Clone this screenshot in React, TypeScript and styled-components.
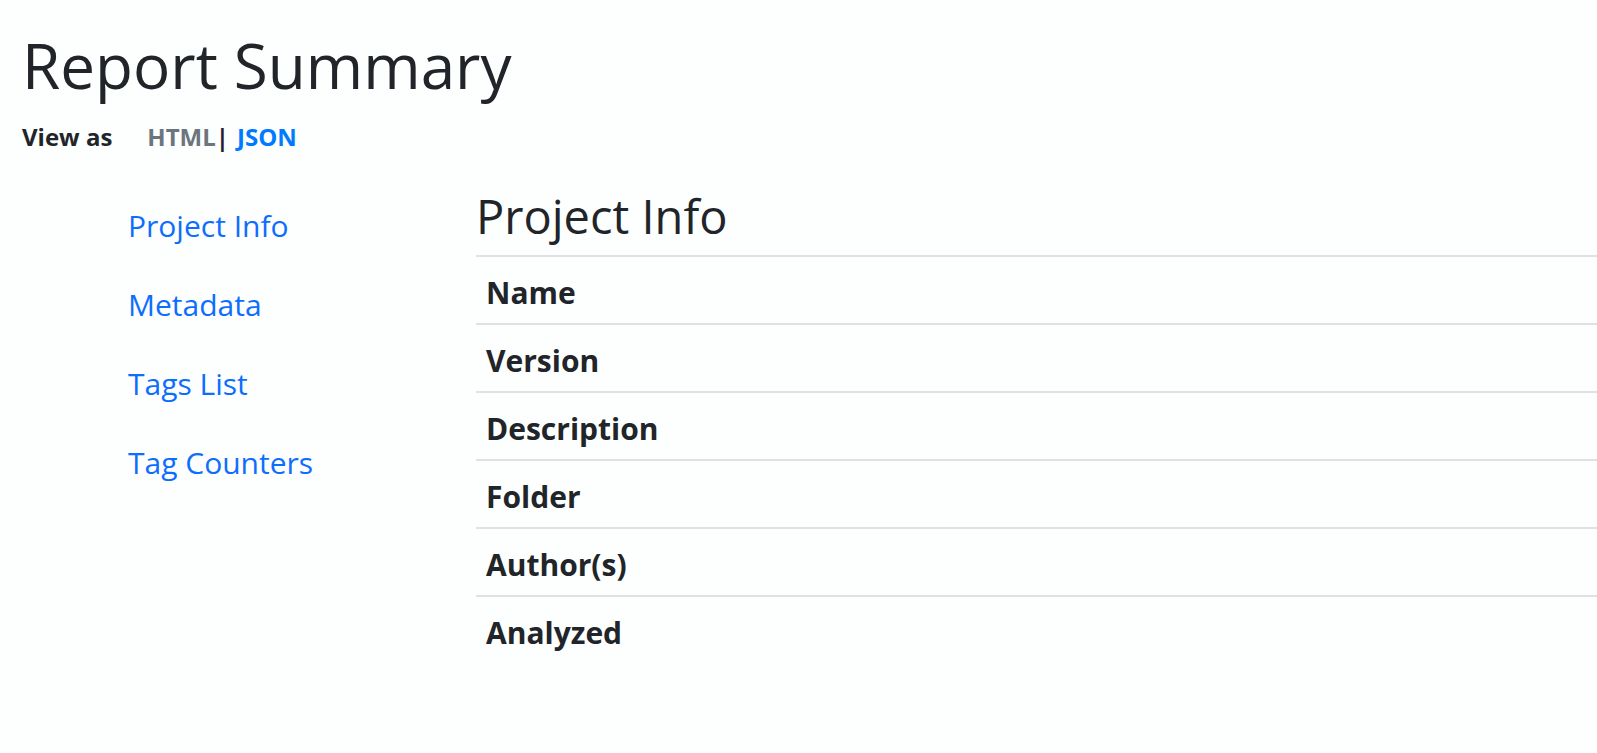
import styled, { createGlobalStyle } from 'styled-components';

const GlobalStyle = createGlobalStyle`
	html, body {
		margin: 0;
		padding: 0;
		background: #fdfefe;
	}
	body {
		font-family: 'Open Sans', 'Noto Sans', sans-serif;
		color: #212529;
	}
`;

const Page = styled.div`
	padding: 29px 0 0 22px;
	min-height: 100vh;
	box-sizing: border-box;
`;

const Title = styled.h1`
	margin: 0;
	font-size: 62px;
	font-weight: 400;
	line-height: 72px;
`;

const ViewBar = styled.div`
	display: flex;
	align-items: baseline;
	margin-top: 18px;
	font-size: 24px;
	font-weight: 700;
	line-height: 36px;
`;

const ViewLabel = styled.span`
	margin-right: 35px;
`;

const Format = styled.a<{ $active?: boolean }>`
	color: ${(p) => (p.$active ? '#007bff' : '#6c757d')};
	text-decoration: none;
`;

const Divider = styled.span`
	margin-right: 8px;
	color: #2a1f2d;
`;

const Layout = styled.div`
	display: grid;
	grid-template-columns: 454px 1fr;
	margin-top: 32px;
`;

const Nav = styled.nav`
	display: flex;
	flex-direction: column;
	padding-left: 106px;
`;

const NavLink = styled.a`
	display: block;
	color: #0d6efd;
	font-size: 30px;
	line-height: 45px;
	padding: 16px 0 18px;
	text-decoration: none;
`;

const Content = styled.section``;

const Heading = styled.h2`
	margin: 0;
	font-size: 47px;
	font-weight: 400;
	line-height: 58px;
	padding-bottom: 10px;
`;

const Table = styled.table`
	width: 100%;
	border-collapse: collapse;
`;

const Row = styled.tr`
	& + & th {
		border-top: 2px solid #dee2e6;
	}
	&:first-child th {
		border-top: 2px solid #dee2e6;
	}
`;

const Label = styled.th`
	text-align: left;
	font-size: 30px;
	font-weight: 700;
	line-height: 45px;
	padding: 13px 10px 8px;
`;

const sections = ['Project Info', 'Metadata', 'Tags List', 'Tag Counters'];
const fields = ['Name', 'Version', 'Description', 'Folder', 'Author(s)', 'Analyzed'];

export default function App() {
	return (
		<>
			<GlobalStyle />
			<Page>
				<Title>Report Summary</Title>
				<ViewBar>
					<ViewLabel>View as</ViewLabel>
					<Format href="#">HTML</Format>
					<Divider>|</Divider>
					<Format href="#" $active>
						JSON
					</Format>
				</ViewBar>
				<Layout>
					<Nav>
						{sections.map((s) => (
							<NavLink key={s} href="#">
								{s}
							</NavLink>
						))}
					</Nav>
					<Content>
						<Heading>Project Info</Heading>
						<Table>
							<tbody>
								{fields.map((f) => (
									<Row key={f}>
										<Label>{f}</Label>
									</Row>
								))}
							</tbody>
						</Table>
					</Content>
				</Layout>
			</Page>
		</>
	);
}
